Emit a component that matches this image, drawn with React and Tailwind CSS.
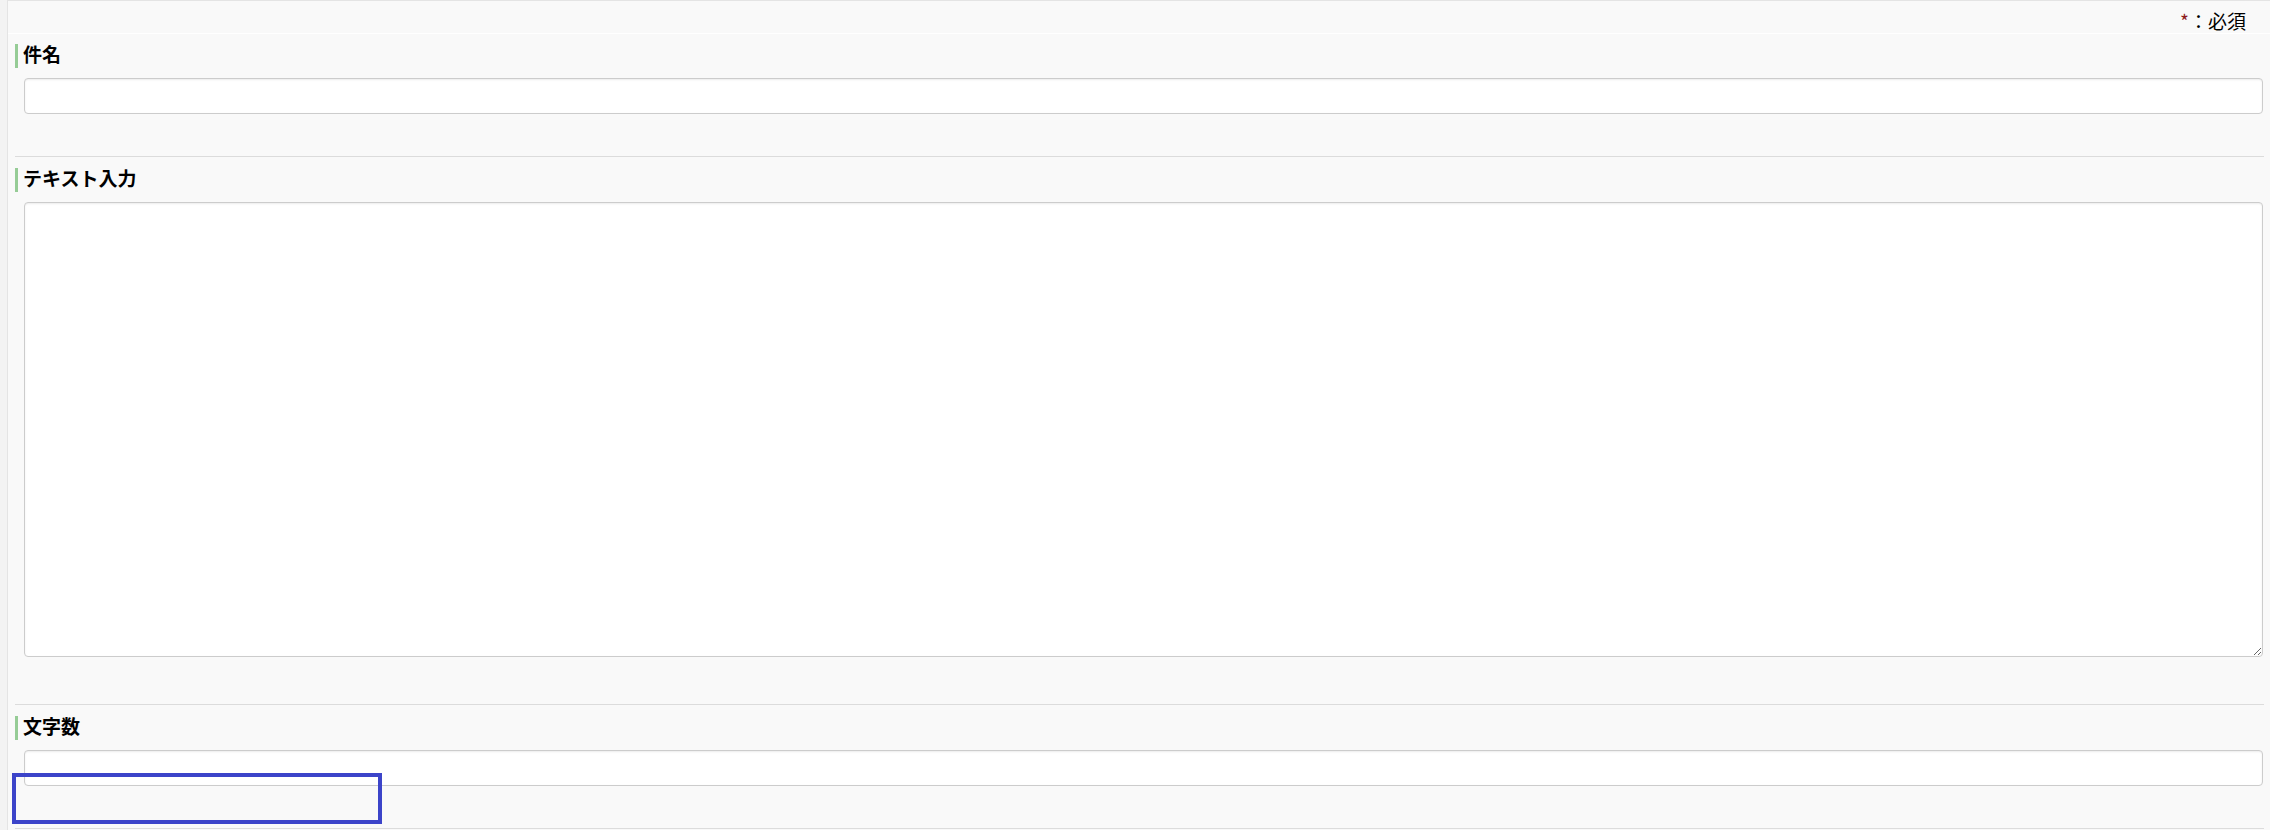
import React from 'react';

const font = { fontFamily: '"Noto Sans CJK JP", "Noto Sans", sans-serif' };

const Label = ({ children }) => (
    <div className="flex items-start h-[24px] border-l-[3px] border-[#96cc96] pl-[5px] text-[19px] font-bold text-black leading-none">
        {children}
    </div>
);

const fieldClass =
    'block w-full bg-white border border-[#cccccc] rounded-[4px] shadow-[inset_0_1px_2px_rgba(0,0,0,0.08)] outline-none';

const App = () => {
    return (
        <div className="w-full h-[830px] bg-[#f3f3f3] pl-[7px] overflow-hidden" style={font}>
            <div className="relative h-full bg-[#f9f9f9] border-l border-t border-[#e4e4e4]">
                {/* header */}
                <div className="h-[33px] flex items-start justify-end pt-[10px] pr-[24px] border-b border-white text-[19px] text-black leading-none">
                    <span className="text-[#8e1b1b]">*</span>
                    <span>：必須</span>
                </div>

                <div className="ml-[7px] mr-[6px]">
                    {/* 件名 */}
                    <div className="pt-[10px] pb-[42px] border-b border-[#dcdcdc]">
                        <Label>件名</Label>
                        <div className="pl-[9px] pr-[1px] mt-[10px]">
                            <input type="text" className={`${fieldClass} h-[36px]`} />
                        </div>
                    </div>

                    {/* テキスト入力 */}
                    <div className="pt-[11px] pb-[47px] border-b border-[#dcdcdc]">
                        <Label>テキスト入力</Label>
                        <div className="pl-[9px] pr-[1px] mt-[10px]">
                            <textarea className={`${fieldClass} h-[455px] resize-y`} />
                        </div>
                    </div>

                    {/* 文字数 */}
                    <div className="pt-[11px] pb-[42px] border-b border-[#dcdcdc]">
                        <Label>文字数</Label>
                        <div className="pl-[9px] pr-[1px] mt-[10px]">
                            <input type="text" className={`${fieldClass} h-[36px]`} />
                        </div>
                    </div>
                </div>

                {/* highlight box */}
                <div className="absolute left-[4px] top-[772px] w-[370px] h-[51px] border-[4px] border-[#3c44c9]" />
            </div>
        </div>
    );
};

export default App;
